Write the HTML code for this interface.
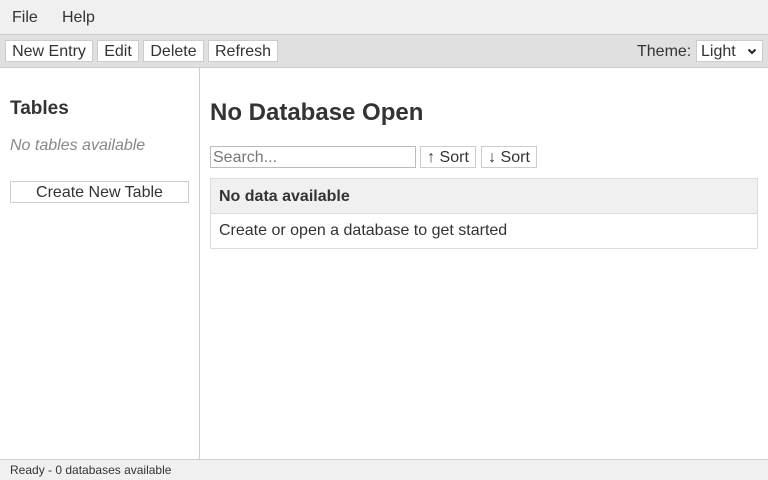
<!DOCTYPE html>
<html><head><style>
*{box-sizing:border-box;margin:0;padding:0}
body{width:768px;height:480px;position:relative;font-family:"Liberation Sans",sans-serif;color:#333;background:#fff;overflow:hidden}
.a{position:absolute}
.menu{left:0;top:0;width:768px;height:34px;background:#f0f0f0;font-size:16px}
.tb{left:0;top:34px;width:768px;height:34px;background:#e0e0e0;border-top:1px solid #ccc;border-bottom:1px solid #ccc}
.btn{position:absolute;height:22px;background:#fff;border:1px solid #ccc;font-size:16px;line-height:22px;text-align:center;color:#333}
.side{left:0;top:68px;width:200px;height:392px;border-right:1px solid #ccc}
.status{left:0;top:459px;width:768px;height:21px;background:#f0f0f0;border-top:1px solid #ccc;font-size:12px;padding:3px 10px}
</style></head><body>
<div class="a menu"><span class="a" style="left:12px;top:9px">File</span><span class="a" style="left:62px;top:9px">Help</span></div>
<div class="a tb">
<div class="btn" style="left:5px;top:5px;width:88px">New Entry</div>
<div class="btn" style="left:97px;top:5px;width:42px">Edit</div>
<div class="btn" style="left:143px;top:5px;width:61px">Delete</div>
<div class="btn" style="left:208px;top:5px;width:70px">Refresh</div>
<span class="a" style="left:637px;top:8px;font-size:16px">Theme:</span>
<div class="btn" style="left:696px;top:5px;width:67px;text-align:left;padding-left:4px">Light<svg style="position:absolute;right:5px;top:7px" width="10" height="7" viewBox="0 0 10 7"><path d="M1.5 1.5L5 5L8.5 1.5" fill="none" stroke="#222" stroke-width="2"/></svg></div>
</div>
<div class="a side">
<div class="a" style="left:10px;top:30px;font-size:19px;font-weight:bold">Tables</div>
<div class="a" style="left:10px;top:69px;font-size:16px;font-style:italic;color:#888">No tables available</div>
<div class="btn" style="left:10px;top:113px;width:179px">Create New Table</div>
</div>
<div class="a" style="left:210px;top:99px;font-size:24px;font-weight:bold">No Database Open</div>
<div class="btn" style="left:210px;top:146px;width:206px;text-align:left;padding-left:2px;color:#777;border-color:#bbb">Search...</div>
<div class="btn" style="left:420px;top:146px;width:56px">↑ Sort</div>
<div class="btn" style="left:481px;top:146px;width:56px">↓ Sort</div>
<div class="a" style="left:210px;top:178px;width:548px;height:71px;border:1px solid #ddd">
<div style="height:35px;background:#f0f0f0;border-bottom:1px solid #ddd;font-weight:bold;font-size:16px;padding:9px 8px 0">No data available</div>
<div style="font-size:16px;padding:8px 8px">Create or open a database to get started</div>
</div>
<div class="a status">Ready - 0 databases available</div>
</body></html>
